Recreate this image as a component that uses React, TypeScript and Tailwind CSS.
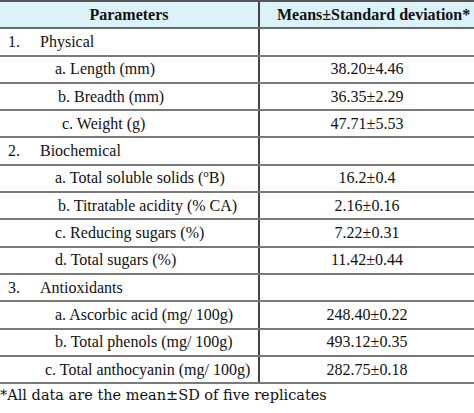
const rows: { label: string; pad?: string; value?: string; head?: boolean; num?: string }[] = [
  { num: "1.", label: "Physical", head: true },
  { label: "a. Length (mm)", pad: "pl-[55px]", value: "38.20±4.46" },
  { label: "b. Breadth (mm)", pad: "pl-[58px]", value: "36.35±2.29" },
  { label: "c. Weight (g)", pad: "pl-[62px]", value: "47.71±5.53" },
  { num: "2.", label: "Biochemical", head: true },
  { label: "a. Total soluble solids (°B)", pad: "pl-[55px]", value: "16.2±0.4" },
  { label: "b. Titratable acidity (% CA)", pad: "pl-[58px]", value: "2.16±0.16" },
  { label: "c. Reducing sugars (%)", pad: "pl-[55px]", value: "7.22±0.31" },
  { label: "d. Total sugars (%)", pad: "pl-[55px]", value: "11.42±0.44" },
  { num: "3.", label: "Antioxidants", head: true },
  { label: "a. Ascorbic acid (mg/ 100g)", pad: "pl-[55px]", value: "248.40±0.22" },
  { label: "b. Total phenols (mg/ 100g)", pad: "pl-[55px]", value: "493.12±0.35" },
  { label: "c. Total anthocyanin (mg/ 100g)", pad: "pl-[45px]", value: "282.75±0.18" },
];

function LabelCell({ row }: { row: (typeof rows)[number] }) {
  if (row.head) {
    return (
      <div className="flex items-center pl-[8px]">
        <span className="w-[32px]">{row.num}</span>
        <span>{row.label}</span>
      </div>
    );
  }
  // the degree sign is a superscript o in the original
  if (row.label.includes("°")) {
    return (
      <div className={`whitespace-nowrap ${row.pad}`}>
        a. Total soluble solids (<span className="relative -top-[6px] text-[11px]">o</span>B)
      </div>
    );
  }
  return <div className={`whitespace-nowrap ${row.pad}`}>{row.label}</div>;
}

export default function App() {
  return (
    <div
      className="w-[474px] h-[413px] overflow-hidden bg-white text-[#111]"
      style={{ fontFamily: '"Liberation Serif", "Times New Roman", serif' }}
    >
      <div className="border-t-2 border-[#555]">
        {/* Header */}
        <div className="flex h-[27.3px] box-border border-b-2 border-[#6a6a6a] bg-[#dbf2f8] text-[16px] font-bold">
          <div className="w-[260px] shrink-0 border-r-2 border-[#444] flex items-center justify-center">
            Parameters
          </div>
          <div className="flex-1 flex items-center pl-[17px] whitespace-nowrap">
            Means±Standard deviation*
          </div>
        </div>

        {rows.map((row, i) => (
          <div
            key={i}
            className="flex h-[27.3px] box-border border-b-2 border-[#7a7a7a] text-[16px]"
          >
            <div className="w-[260px] shrink-0 border-r-2 border-[#444] flex items-center">
              <LabelCell row={row} />
            </div>
            <div className="flex-1 flex items-center justify-center">
              {row.value ?? ""}
            </div>
          </div>
        ))}
      </div>

      <div
        className="pt-[2px] text-[14.5px] leading-[18px] whitespace-nowrap"
        style={{ fontFamily: '"DejaVu Serif", serif' }}
      >
        *All data are the mean±SD of five replicates
      </div>
    </div>
  );
}
